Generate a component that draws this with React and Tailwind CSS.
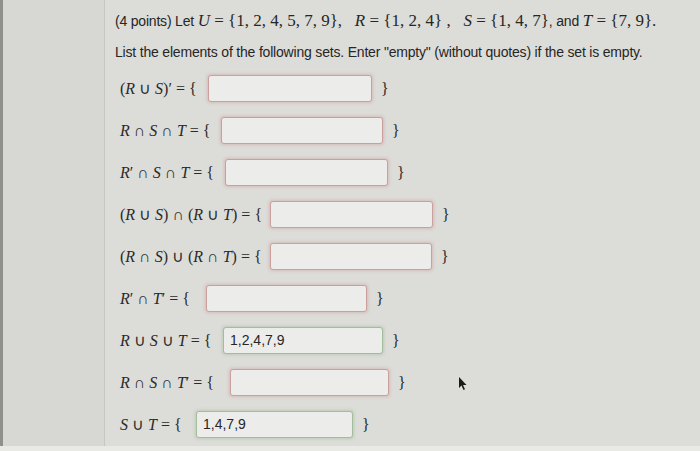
import React from 'react';

const I = ({ children }) => <span className="italic">{children}</span>;

const rows = [
  { label: <>(<I>R</I> ∪ <I>S</I>)′ = {'{'}</>, lw: 'w-[88px]', iw: 'w-[164px]' },
  { label: <><I>R</I> ∩ <I>S</I> ∩ <I>T</I> = {'{'}</>, lw: 'w-[101px]', iw: 'w-[162px]' },
  { label: <><I>R</I>′ ∩ <I>S</I> ∩ <I>T</I> = {'{'}</>, lw: 'w-[105px]', iw: 'w-[163px]' },
  { label: <>(<I>R</I> ∪ <I>S</I>) ∩ (<I>R</I> ∪ <I>T</I>) = {'{'}</>, lw: 'w-[150px]', iw: 'w-[163px]' },
  { label: <>(<I>R</I> ∩ <I>S</I>) ∪ (<I>R</I> ∩ <I>T</I>) = {'{'}</>, lw: 'w-[150px]', iw: 'w-[162px]' },
  { label: <><I>R</I>′ ∩ <I>T</I>′ = {'{'}</>, lw: 'w-[86px]', iw: 'w-[161px]' },
  { label: <><I>R</I> ∪ <I>S</I> ∪ <I>T</I> = {'{'}</>, lw: 'w-[103px]', iw: 'w-[160px]', value: '1,2,4,7,9' },
  { label: <><I>R</I> ∩ <I>S</I> ∩ <I>T</I>′ = {'{'}</>, lw: 'w-[110px]', iw: 'w-[159px]' },
  { label: <><I>S</I> ∪ <I>T</I> = {'{'}</>, lw: 'w-[76px]', iw: 'w-[157px]', value: '1,4,7,9' },
];

const SetRow = ({ row, last }) => (
  <div className="flex h-[42px] items-center">
    <span className={`${row.lw} shrink-0 whitespace-nowrap font-['Liberation_Serif',serif] text-[16px] text-[#2a2a2a]`}>
      {row.label}
    </span>
    <div
      className={
        row.value
          ? `${row.iw} flex h-[27px] shrink-0 items-center rounded-[3px] border border-[#a3bd9b] bg-[#ececea] pl-[6px] font-['Liberation_Sans',sans-serif] text-[14px] text-[#262626] shadow-[0_0_3px_1px_rgba(120,170,110,0.3)]`
          : `${row.iw} h-[27px] shrink-0 rounded-[3px] border border-[#c9a09e] bg-[#ececea] shadow-[0_0_3px_1px_rgba(200,120,120,0.3)]`
      }
    >
      {row.value}
    </div>
    <span className="ml-[9px] font-['Liberation_Serif',serif] text-[16px] text-[#2a2a2a]">{'}'}</span>
    {last && (
      <svg className="ml-[52px] mt-[2px]" width="10" height="15" viewBox="0 0 10 15">
        <path d="M1 1 L1 12 L3.5 9.5 L5.5 14 L7 13.3 L5 9 L8.5 9 Z" fill="#1a1a1a" />
      </svg>
    )}
  </div>
);

export default function App() {
  return (
    <div className="flex h-[451px] w-[700px] flex-col overflow-hidden bg-[#e9e9e6]">
      <div className="flex h-[446px]">
        <div className="w-[105px] shrink-0 border-l-[3px] border-r border-l-[#8f8f8c] border-r-[#c6c6c2] bg-[#d7d7d4]" />
        <div className="flex-1 bg-[#dcdcd8] pl-[10px] pt-[8px]">
          <p className="whitespace-nowrap font-['Liberation_Sans',sans-serif] text-[14px] tracking-[-0.2px] text-[#262626]">
            (4 points) Let{' '}
            <span className="font-['Liberation_Serif',serif] text-[17px] tracking-normal">
              <I>U</I> = {'{'}1, 2, 4, 5, 7, 9{'}'},&nbsp;&nbsp; <I>R</I> = {'{'}1, 2, 4{'}'} ,&nbsp;&nbsp; <I>S</I> = {'{'}1, 4, 7{'}'}
            </span>
            , and{' '}
            <span className="font-['Liberation_Serif',serif] text-[17px] tracking-normal">
              <I>T</I> = {'{'}7, 9{'}'}.
            </span>
          </p>
          <p className="mt-[8px] whitespace-nowrap font-['Liberation_Sans',sans-serif] text-[14px] tracking-[-0.19px] text-[#262626]">
            List the elements of the following sets. Enter "empty" (without quotes) if the set is empty.
          </p>
          <div className="mt-[5px] pl-[5px]">
            {rows.map((row, i) => (
              <SetRow key={i} row={row} last={i === 7} />
            ))}
          </div>
        </div>
      </div>
    </div>
  );
}
